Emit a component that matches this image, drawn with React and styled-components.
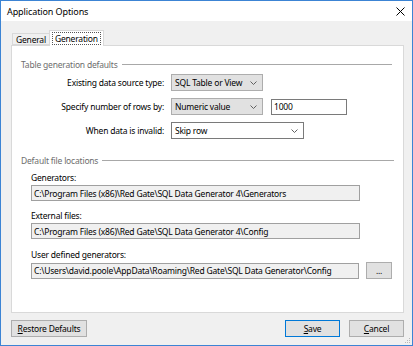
import React from "react";
import styled, { createGlobalStyle } from "styled-components";

const Global = createGlobalStyle`
  html, body { margin: 0; padding: 0; background: #ffffff; }
  body {
    font-family: "Noto Sans", "Open Sans", sans-serif;
    font-size: 8.5px;
    letter-spacing: -0.2px;
    color: #000;
  }
  * { box-sizing: border-box; }
`;

const Window = styled.div`
  width: 413px;
  height: 346px;
  border: 1px solid #3c84d4;
  display: flex;
  flex-direction: column;
  background: #f0f0f0;
  position: relative;
`;

const TitleBar = styled.div`
  height: 22px;
  background: #ffffff;
  display: flex;
  align-items: center;
  justify-content: space-between;
  padding: 0 7px 0 6px;
  font-size: 9px;
  letter-spacing: -0.1px;
  color: #000;
`;

const CloseIcon = styled.svg`
  width: 9px;
  height: 9px;
  margin-top: 1px;
`;

const Body = styled.div`
  flex: 1;
  display: flex;
  flex-direction: column;
  padding: 9px 8px 8px 9px;
`;

const TabStrip = styled.div`
  display: flex;
  align-items: flex-end;
  height: 15px;
  padding-left: 2px;
  position: relative;
  z-index: 1;
`;

const Tab = styled.div`
  height: ${(p) => (p.$active ? "16px" : "12px")};
  padding: 0 3px;
  background: ${(p) => (p.$active ? "#ffffff" : "#f0f0f0")};
  border: 1px solid #d9d9d9;
  border-bottom: ${(p) => (p.$active ? "none" : "1px solid #d9d9d9")};
  margin-left: ${(p) => (p.$active ? "-1px" : "0")};
  margin-bottom: ${(p) => (p.$active ? "-1px" : "0")};
  display: flex;
  align-items: ${(p) => (p.$active ? "flex-start" : "center")};
  padding-top: ${(p) => (p.$active ? "2px" : "0")};
  line-height: 11px;
`;

const Focus = styled.span`
  outline: 1px dotted #555;
  outline-offset: 0px;
  padding: 0 2px;
`;

const Panel = styled.div`
  height: 268px;
  margin-left: 1px;
  background: #ffffff;
  border: 1px solid #d9d9d9;
  padding: 12px 11px 0 9px;
  display: flex;
  flex-direction: column;
`;

const GroupHeader = styled.div`
  display: flex;
  align-items: center;
  gap: 4px;
  height: 12px;
  color: #6d6d6d;
  margin-top: ${(p) => p.$top || "0px"};
`;

const Rule = styled.div`
  flex: 1;
  height: 1px;
  background: #a8a8a8;
  margin-right: ${(p) => p.$right || "0px"};
`;

const FormGrid = styled.div`
  display: grid;
  grid-template-columns: 143px auto;
  column-gap: 7px;
  row-gap: 7px;
  margin-top: 4px;
  align-items: center;
`;

const Label = styled.div`
  text-align: right;
  white-space: nowrap;
`;

const ControlRow = styled.div`
  display: flex;
  align-items: center;
  gap: 8px;
`;

const Combo = styled.div`
  width: ${(p) => p.$w}px;
  height: 17px;
  background: ${(p) => (p.$white ? "#ffffff" : "#e1e1e1")};
  border: 1px solid ${(p) => (p.$white ? "#7a7a7a" : "#adadad")};
  display: flex;
  align-items: center;
  justify-content: space-between;
  padding: 0 5px 0 3px;
  white-space: nowrap;
`;

const Chevron = styled.svg`
  width: 7px;
  height: 4px;
`;

const TextBox = styled.div`
  width: ${(p) => p.$w}px;
  height: 16px;
  background: ${(p) => (p.$readonly ? "#f0f0f0" : "#ffffff")};
  border: 1px solid ${(p) => (p.$readonly ? "#a0a0a0" : "#7a7a7a")};
  display: flex;
  align-items: center;
  padding-left: 2px;
  white-space: nowrap;
  overflow: hidden;
`;

const PathBlock = styled.div`
  display: flex;
  flex-direction: column;
  gap: 1px;
  padding-left: 10px;
  margin-top: ${(p) => p.$top || "0px"};
`;

const PathLabel = styled.div`
  height: 12px;
  line-height: 12px;
`;

const PathRow = styled.div`
  display: flex;
  align-items: center;
  gap: 7px;
`;

const Button = styled.div`
  width: ${(p) => p.$w}px;
  height: 17px;
  background: #e1e1e1;
  border: 1px solid ${(p) => (p.$default ? "#0078d7" : "#adadad")};
  display: flex;
  align-items: center;
  justify-content: center;
  white-space: nowrap;
  u { text-decoration: underline; }
`;

const Footer = styled.div`
  display: flex;
  align-items: center;
  margin-top: 7px;
  padding-left: 1px;
`;

const Spacer = styled.div`
  flex: 1;
`;

const RightButtons = styled.div`
  display: flex;
  gap: 9px;
`;

const Grip = styled.svg`
  position: absolute;
  right: 1px;
  bottom: 1px;
  width: 8px;
  height: 8px;
`;

const ChevronIcon = () => (
  <Chevron viewBox="0 0 7 4">
    <path d="M0.5 0.5 L3.5 3.5 L6.5 0.5" fill="none" stroke="#606060" strokeWidth="1" />
  </Chevron>
);

export default function App() {
  return (
    <>
      <Global />
      <Window>
        <TitleBar>
          <span>Application Options</span>
          <CloseIcon viewBox="0 0 9 9">
            <path d="M0.5 0.5 L8.5 8.5 M8.5 0.5 L0.5 8.5" stroke="#000" strokeWidth="1" />
          </CloseIcon>
        </TitleBar>
        <Body>
          <TabStrip>
            <Tab>General</Tab>
            <Tab $active>
              <Focus>Generation</Focus>
            </Tab>
          </TabStrip>
          <Panel>
            <GroupHeader>
              <span>Table generation defaults</span>
              <Rule />
            </GroupHeader>
            <FormGrid>
              <Label>Existing data source type:</Label>
              <ControlRow>
                <Combo $w={92}>
                  <span>SQL Table or View</span>
                  <ChevronIcon />
                </Combo>
              </ControlRow>
              <Label>Specify number of rows by:</Label>
              <ControlRow>
                <Combo $w={92}>
                  <span>Numeric value</span>
                  <ChevronIcon />
                </Combo>
                <TextBox $w={76}>1000</TextBox>
              </ControlRow>
              <Label>When data is invalid:</Label>
              <ControlRow>
                <Combo $w={133} $white>
                  <span>Skip row</span>
                  <ChevronIcon />
                </Combo>
              </ControlRow>
            </FormGrid>
            <GroupHeader $top="15px">
              <span>Default file locations</span>
              <Rule $right="-2px" />
            </GroupHeader>
            <PathBlock $top="6px">
              <PathLabel>Generators:</PathLabel>
              <TextBox $w={329} $readonly>
                C:\Program Files (x86)\Red Gate\SQL Data Generator 4\Generators
              </TextBox>
            </PathBlock>
            <PathBlock $top="9px">
              <PathLabel>External files:</PathLabel>
              <TextBox $w={329} $readonly>
                C:\Program Files (x86)\Red Gate\SQL Data Generator 4\Config
              </TextBox>
            </PathBlock>
            <PathBlock $top="10px">
              <PathLabel>User defined generators:</PathLabel>
              <PathRow>
                <TextBox $w={329} $readonly>
                  C:\Users\david.poole\AppData\Roaming\Red Gate\SQL Data Generator\Config
                </TextBox>
                <Button $w={26}>...</Button>
              </PathRow>
            </PathBlock>
          </Panel>
          <Footer>
            <Button $w={76}>
              <span><u>R</u>estore Defaults</span>
            </Button>
            <Spacer />
            <RightButtons>
              <Button $w={55} $default>
                <span><u>S</u>ave</span>
              </Button>
              <Button $w={55}>
                <span><u>C</u>ancel</span>
              </Button>
            </RightButtons>
          </Footer>
        </Body>
        <Grip viewBox="0 0 8 8">
          <rect x="6" y="6" width="1" height="1" fill="#b8b8b8" />
          <rect x="4" y="6" width="1" height="1" fill="#b8b8b8" />
          <rect x="2" y="6" width="1" height="1" fill="#b8b8b8" />
          <rect x="6" y="4" width="1" height="1" fill="#b8b8b8" />
          <rect x="4" y="4" width="1" height="1" fill="#b8b8b8" />
          <rect x="6" y="2" width="1" height="1" fill="#b8b8b8" />
        </Grip>
      </Window>
    </>
  );
}
